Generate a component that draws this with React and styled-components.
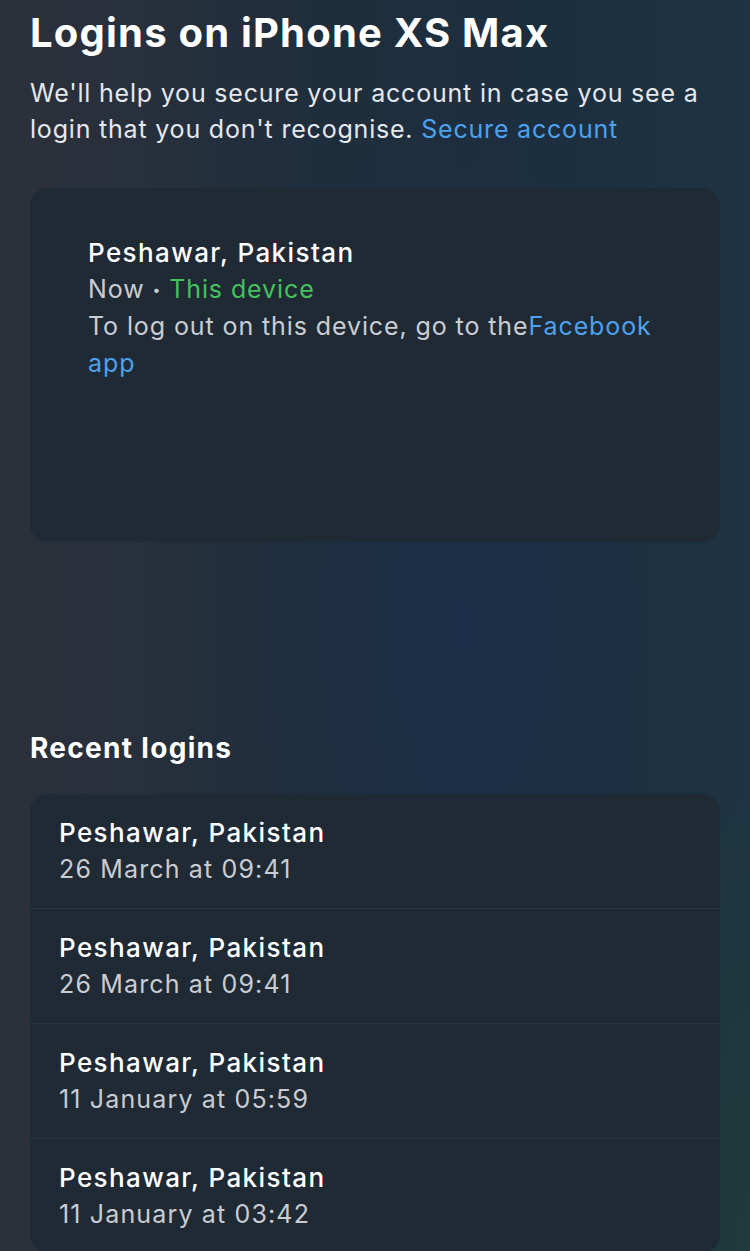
import React from "react";
import styled, { createGlobalStyle } from "styled-components";

const GlobalStyle = createGlobalStyle`
  html, body {
    margin: 0;
    padding: 0;
    background: #1d2c3a;
  }
  body {
    font-family: Inter, "Noto Sans", sans-serif;
    -webkit-font-smoothing: antialiased;
  }
`;

const recentLogins = [
  { place: "Peshawar, Pakistan", time: "26 March at 09:41" },
  { place: "Peshawar, Pakistan", time: "26 March at 09:41" },
  { place: "Peshawar, Pakistan", time: "11 January at 05:59" },
  { place: "Peshawar, Pakistan", time: "11 January at 03:42" },
];

const App = () => {
  return (
    <>
      <GlobalStyle />
      <Page>
        <Title>Logins on iPhone XS Max</Title>
        <Intro>
          We'll help you secure your account in case you see a login that you
          don't recognise. <Link>Secure account</Link>
        </Intro>

        {/* current device */}
        <DeviceCard>
          <Place>Peshawar, Pakistan</Place>
          <Meta>
            Now <Dot>•</Dot> <Green>This device</Green>
          </Meta>
          <Meta>
            To log out on this device, go to the<Link>Facebook app</Link>
          </Meta>
        </DeviceCard>

        <SectionTitle>Recent logins</SectionTitle>

        <List>
          {recentLogins.map((item, i) => (
            <Row key={i}>
              <Place>{item.place}</Place>
              <Meta $wide>{item.time}</Meta>
            </Row>
          ))}
        </List>
      </Page>
    </>
  );
};

// styled components

const Page = styled.div`
  min-height: 1251px;
  box-sizing: border-box;
  padding: 8px 30px 0 30px;
  overflow: hidden;
  background:
    radial-gradient(ellipse 240px 520px at 62% 50%, rgba(28, 47, 74, 0.85), rgba(28, 47, 74, 0) 100%),
    radial-gradient(ellipse 360px 460px at 108% 100%, rgba(31, 62, 56, 0.8), rgba(31, 62, 56, 0) 100%),
    linear-gradient(90deg, #2c3039 0%, #28303c 16%, #1f2e3d 42%, #1c2f3f 75%, #1e3442 100%);
`;

const Title = styled.h1`
  margin: 0;
  font-size: 40px;
  line-height: 50px;
  font-weight: 700;
  color: #ffffff;
  letter-spacing: 1.2px;
`;

const Intro = styled.p`
  margin: 17px 0 0 0;
  font-size: 25px;
  line-height: 36px;
  color: #e6e8ec;
  letter-spacing: 0.8px;
`;

const Link = styled.span`
  color: #4ea1ee;
`;

const Green = styled.span`
  color: #44c15c;
`;

const Dot = styled.span`
  font-size: 14px;
  vertical-align: 3px;
`;

const DeviceCard = styled.div`
  margin-top: 41px;
  height: 354px;
  box-sizing: border-box;
  padding: 46px 58px 0 58px;
  background: #1f2a35;
  border-radius: 18px;
`;

const Place = styled.div`
  font-size: 26px;
  line-height: 37px;
  font-weight: 500;
  color: #ffffff;
  letter-spacing: 1.4px;
`;

const Meta = styled.div`
  font-size: 25px;
  line-height: 37px;
  color: #c9cdd3;
  letter-spacing: ${(p) => (p.$wide ? "1.15px" : "0.9px")};
`;

const SectionTitle = styled.h2`
  margin: 188px 0 0 0;
  font-size: 28px;
  line-height: 36px;
  font-weight: 700;
  color: #ffffff;
  letter-spacing: 1.3px;
`;

const List = styled.div`
  margin-top: 28px;
  background: #1f2a35;
  border-radius: 18px;
  overflow: hidden;
`;

const Row = styled.div`
  padding: 20px 29px 20px 29px;
  border-top: 1px solid #283440;
  &:first-child {
    border-top: none;
  }
`;

export default App;
